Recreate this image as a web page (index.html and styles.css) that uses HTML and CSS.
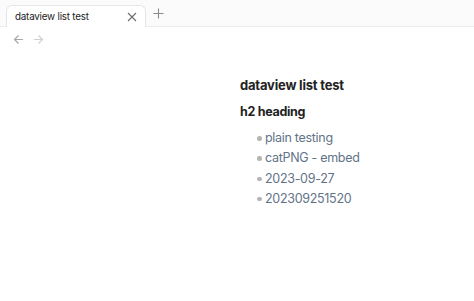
FILE: index.html
```html
<!DOCTYPE html>
<html>
<head>
  <title>dataview list test</title>
  <link rel="stylesheet" href="styles.css">
</head>
<body>
  <div class="tabbar">
    <div class="tab">
      <span class="tab-title">dataview list test</span>
      <span class="tab-close">
        <svg width="10" height="10" viewBox="0 0 10 10"><path d="M1 1L9 9M9 1L1 9" stroke="#6e6e6e" stroke-width="1.1" fill="none"/></svg>
      </span>
    </div>
    <span class="tab-new">
      <svg width="11" height="11" viewBox="0 0 11 11"><path d="M5.5 0.5V10.5M0.5 5.5H10.5" stroke="#8a8a8a" stroke-width="1.1" fill="none"/></svg>
    </span>
  </div>

  <div class="nav">
    <svg width="11" height="11" viewBox="0 0 11 11"><path d="M10 5.5H1.5M5.5 1.5L1.5 5.5L5.5 9.5" stroke="#a8a8a8" stroke-width="1.2" fill="none"/></svg>
    <svg width="11" height="11" viewBox="0 0 11 11"><path d="M1 5.5H9.5M5.5 1.5L9.5 5.5L5.5 9.5" stroke="#cfcfcf" stroke-width="1.2" fill="none"/></svg>
  </div>

  <div class="note">
    <h1>dataview list test</h1>
    <h2>h2 heading</h2>
    <ul>
      <li>plain testing</li>
      <li>catPNG - embed</li>
      <li>2023-09-27</li>
      <li>202309251520</li>
    </ul>
  </div>
</body>
</html>
```

FILE: styles.css
```css
body {
  margin: 0;
  font-family: Inter, "Liberation Sans", sans-serif;
  background-color: #fff;
  color: #222;
}

.tabbar {
  display: flex;
  align-items: flex-end;
  height: 26px;
  padding-left: 6px;
  background-color: #fbfbfb;
  border-bottom: 1px solid #ececec;
}

.tab {
  display: flex;
  align-items: center;
  justify-content: space-between;
  box-sizing: border-box;
  width: 140px;
  height: 22px;
  padding: 0 8px 0 8px;
  margin-bottom: -1px;
  background-color: #fff;
  border: 1px solid #e6e6e6;
  border-bottom: none;
  border-radius: 6px 6px 0 0;
}

.tab-title {
  font-size: 9.8px;
  letter-spacing: -0.2px;
  color: #222;
}

.tab-close {
  display: flex;
}

.tab-new {
  display: flex;
  margin: 0 0 7px 7px;
}

.nav {
  display: flex;
  gap: 9px;
  padding: 7px 0 0 13px;
}

.note {
  padding: 30px 0 0 240px;
}

h1 {
  margin: 0;
  font-size: 13px;
  letter-spacing: -0.2px;
  font-weight: 700;
  line-height: 20px;
}

h2 {
  margin: 7px 0 0 0;
  font-size: 12.5px;
  letter-spacing: -0.3px;
  font-weight: 700;
  line-height: 20px;
}

ul {
  margin: 6px 0 0 0;
  padding-left: 25px;
  list-style: none;
}

li {
  position: relative;
  font-size: 12.5px;
  letter-spacing: -0.3px;
  line-height: 20.3px;
  color: #627388;
}

li::before {
  content: "";
  position: absolute;
  left: -8px;
  top: 8px;
  width: 4.5px;
  height: 4.5px;
  border-radius: 50%;
  background-color: #b4b4b4;
}
```
